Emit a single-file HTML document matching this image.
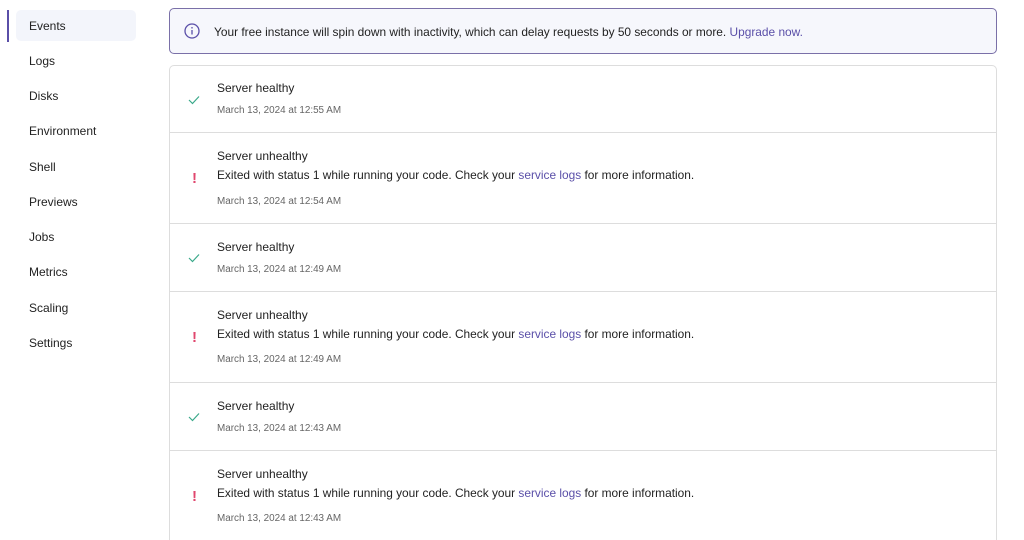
<!DOCTYPE html>
<html><head><style>
*{margin:0;padding:0;box-sizing:border-box}
html,body{width:1024px;height:540px;overflow:hidden}
body{background:#fff;font-family:"Liberation Sans",sans-serif;color:#222;position:relative}
.nav{position:absolute;left:29px;font-size:12px;color:#222}
.act{position:absolute;left:16px;top:10px;width:120px;height:31px;background:#f3f5fb;border-radius:5px}
.bar{position:absolute;left:7px;top:10px;width:2px;height:32px;background:#5a4fa8}
.banner{position:absolute;left:169px;top:8px;width:828px;height:46px;border:1px solid #7a70a8;border-radius:5px;background:#f6f7fc;font-size:12px}
.banner span.t{position:absolute;left:44px;top:16px;font-size:11.9px}
a{color:#5a4fa8;text-decoration:none}
.list{position:absolute;left:169px;top:65px;width:828px;height:475px;border:1px solid #ddd;border-bottom:none;border-radius:5px 5px 0 0}
.row{position:absolute;left:0;width:826px;border-bottom:1px solid #ddd}
.row .ti{position:absolute;left:47px;font-size:12px}
.row .d{position:absolute;left:47px;font-size:11.9px}
.row .dt{position:absolute;left:47px;font-size:9.9px;color:#666}
.ck{position:absolute;left:18px;width:12px;height:10px}
.ex{position:absolute;left:22px;color:#e0476e;font-weight:bold;font-size:15px}
</style></head><body>
<div class="bar"></div><div class="act"></div>
<div class="nav" style="top:19px">Events</div>
<div class="nav" style="top:54px">Logs</div>
<div class="nav" style="top:89px">Disks</div>
<div class="nav" style="top:124px">Environment</div>
<div class="nav" style="top:160px">Shell</div>
<div class="nav" style="top:195px">Previews</div>
<div class="nav" style="top:230px">Jobs</div>
<div class="nav" style="top:265px">Metrics</div>
<div class="nav" style="top:301px">Scaling</div>
<div class="nav" style="top:336px">Settings</div>
<div class="banner">
<svg style="position:absolute;left:14px;top:14px" width="16" height="16" viewBox="0 0 16 16"><circle cx="8" cy="8" r="7" fill="none" stroke="#5a4fa8" stroke-width="1.3"/><line x1="8" y1="7" x2="8" y2="11.5" stroke="#5a4fa8" stroke-width="1.3"/><circle cx="8" cy="4.8" r=".8" fill="#5a4fa8"/></svg>
<span class="t">Your free instance will spin down with inactivity, which can delay requests by 50 seconds or more. <a>Upgrade now.</a></span>
</div>
<div class="list">
<div class="row" style="top:0;height:67px"><svg class="ck" style="top:29px" viewBox="0 0 12 10"><path d="M1 5l3.5 3.5L11 1.5" fill="none" stroke="#3aa98a" stroke-width="1.2"/></svg><div class="ti" style="top:15px">Server healthy</div><div class="dt" style="top:39px">March 13, 2024 at 12:55 AM</div></div>
<div class="row" style="top:67px;height:91px"><div class="ex" style="top:37px">!</div><div class="ti" style="top:16px">Server unhealthy</div><div class="d" style="top:35px">Exited with status 1 while running your code. Check your <a>service logs</a> for more information.</div><div class="dt" style="top:63px">March 13, 2024 at 12:54 AM</div></div>
<div class="row" style="top:158px;height:68px"><svg class="ck" style="top:29px" viewBox="0 0 12 10"><path d="M1 5l3.5 3.5L11 1.5" fill="none" stroke="#3aa98a" stroke-width="1.2"/></svg><div class="ti" style="top:16px">Server healthy</div><div class="dt" style="top:40px">March 13, 2024 at 12:49 AM</div></div>
<div class="row" style="top:226px;height:91px"><div class="ex" style="top:37px">!</div><div class="ti" style="top:16px">Server unhealthy</div><div class="d" style="top:35px">Exited with status 1 while running your code. Check your <a>service logs</a> for more information.</div><div class="dt" style="top:62px">March 13, 2024 at 12:49 AM</div></div>
<div class="row" style="top:317px;height:68px"><svg class="ck" style="top:29px" viewBox="0 0 12 10"><path d="M1 5l3.5 3.5L11 1.5" fill="none" stroke="#3aa98a" stroke-width="1.2"/></svg><div class="ti" style="top:16px">Server healthy</div><div class="dt" style="top:40px">March 13, 2024 at 12:43 AM</div></div>
<div class="row" style="top:385px;height:89px;border-bottom:none"><div class="ex" style="top:37px">!</div><div class="ti" style="top:16px">Server unhealthy</div><div class="d" style="top:35px">Exited with status 1 while running your code. Check your <a>service logs</a> for more information.</div><div class="dt" style="top:62px">March 13, 2024 at 12:43 AM</div></div>
</div>
</body></html>
